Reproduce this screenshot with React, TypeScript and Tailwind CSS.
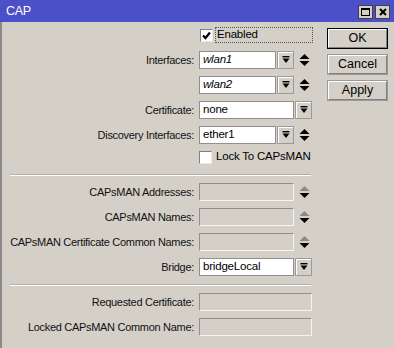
import React from "react";

const font = { fontFamily: '"Liberation Sans", Arial, sans-serif' };

function DropBtn() {
  return (
    <div className="w-[17px] h-[18px] ml-[1px] bg-[#d4d0c8] border border-[#9a9a9a] shadow-[inset_1px_1px_0_#ffffff] flex items-center justify-center">
      <svg width="8" height="8" viewBox="0 0 8 8">
        <rect x="0.5" y="0" width="7" height="1.4" fill="#000" />
        <polygon points="0.5,2.6 7.5,2.6 4,7" fill="#000" />
      </svg>
    </div>
  );
}

function UpDown({ disabledUp }: { disabledUp?: boolean }) {
  return (
    <svg width="11" height="14" viewBox="0 0 11 14" className="ml-[5px]">
      <polygon points="0.5,6 5.5,1 10.5,6" fill={disabledUp ? "#8a8a8a" : "#000"} />
      <polygon points="0.5,8 10.5,8 5.5,13" fill="#000" />
    </svg>
  );
}

function Input({ w, value, italic, disabled }: { w: string; value?: string; italic?: boolean; disabled?: boolean }) {
  return (
    <div
      className={`${w} h-[18px] border border-[#8f8f8f] px-[3px] flex items-center text-[11.5px] tracking-[-0.2px] ${
        disabled ? "bg-[#d4d0c8] border-b-[#f4f4f4] border-r-[#f4f4f4]" : "bg-white"
      } ${italic ? "italic" : ""}`}
    >
      {value}
    </div>
  );
}

function Row({ label, children, className }: { label: string; children: React.ReactNode; className?: string }) {
  return (
    <div className={`flex items-center h-[18px] ${className ?? ""}`}>
      <div className="w-[185px] flex justify-end text-[11px] tracking-[-0.3px] whitespace-nowrap pr-[1px] text-[#111]">
        <span>{label}</span>
      </div>
      <div className="ml-[4px] flex items-center">{children}</div>
    </div>
  );
}

function Checkbox({ checked }: { checked?: boolean }) {
  return (
    <div className="w-[13px] h-[13px] bg-white border border-t-[#808080] border-l-[#808080] border-r-[#e8e8e8] border-b-[#e8e8e8] flex items-center justify-center">
      {checked && (
        <svg width="9" height="9" viewBox="0 0 9 9">
          <polyline points="1,4.5 3.5,7 8,1.5" fill="none" stroke="#000" strokeWidth="2.2" />
        </svg>
      )}
    </div>
  );
}

function Sep({ className }: { className?: string }) {
  return <div className={`w-[301px] h-[2px] border-t border-t-[#b4b0a8] border-b border-b-white ${className ?? ""}`} />;
}

function Btn({ label, def }: { label: string; def?: boolean }) {
  return (
    <div
      className={`w-[61px] h-[21px] flex items-center justify-center text-[12.5px] bg-[#d4d0c8] ${
        def ? "border border-black" : "border border-[#9a9a9a]"
      }`}
    >
      <div className="w-full h-full flex items-center justify-center border border-t-white border-l-white border-r-[#808080] border-b-[#808080]">
        {label}
      </div>
    </div>
  );
}

export default function App() {
  return (
    <div className="w-[394px] h-[348px] bg-[#d4d0c8] flex flex-col text-black overflow-hidden" style={font}>
      <div className="h-[22px] bg-[#4b50c9] flex items-center justify-between pl-[6px] pr-[4px]">
        <span className="text-white text-[12.5px] tracking-[-0.3px]">CAP</span>
        <div className="flex gap-[2px] mt-[1px]">
          <div className="w-[15px] h-[14px] bg-[#d4d0c8] border border-[#404040] flex items-center justify-center">
            <div className="w-[9px] h-[8px] border border-black border-t-2" />
          </div>
          <div className="w-[15px] h-[14px] bg-[#d4d0c8] border border-[#404040] flex items-center justify-center">
            <svg width="8" height="8" viewBox="0 0 8 8">
              <path d="M1 1 L7 7 M7 1 L1 7" stroke="#000" strokeWidth="2" />
            </svg>
          </div>
        </div>
      </div>
      <div className="flex-1 flex border-l-2 border-l-[#8a8a8a]">
        <div className="w-[316px] pl-[8px] flex flex-col">
          <div className="flex items-center h-[16px] mt-[5px] ml-[190px]">
            <Checkbox checked />
            <div className="ml-[2px] w-[98px] h-[16px] border border-dotted border-[#555] flex items-center pl-[1px] text-[11.5px] tracking-[-0.2px]">
              Enabled
            </div>
          </div>
          <Row label="Interfaces:" className="mt-[8px]">
            <Input w="w-[77px]" value="wlan1" italic />
            <DropBtn />
            <UpDown />
          </Row>
          <Row label="" className="mt-[7px]">
            <Input w="w-[77px]" value="wlan2" italic />
            <DropBtn />
            <UpDown />
          </Row>
          <Row label="Certificate:" className="mt-[7px]">
            <Input w="w-[95px]" value="none" />
            <DropBtn />
          </Row>
          <Row label="Discovery Interfaces:" className="mt-[7px]">
            <Input w="w-[77px]" value="ether1" />
            <DropBtn />
            <UpDown />
          </Row>
          <div className="flex items-center h-[14px] mt-[6px] ml-[189px]">
            <Checkbox />
            <span className="ml-[4px] text-[11.5px] tracking-[-0.2px]">Lock To CAPsMAN</span>
          </div>
          <Sep className="mt-[10px]" />
          <Row label="CAPsMAN Addresses:" className="mt-[7px]">
            <Input w="w-[95px]" disabled />
            <UpDown disabledUp />
          </Row>
          <Row label="CAPsMAN Names:" className="mt-[7px]">
            <Input w="w-[95px]" disabled />
            <UpDown disabledUp />
          </Row>
          <Row label="CAPsMAN Certificate Common Names:" className="mt-[7px]">
            <Input w="w-[95px]" disabled />
            <UpDown disabledUp />
          </Row>
          <Row label="Bridge:" className="mt-[7px]">
            <Input w="w-[95px]" value="bridgeLocal" />
            <DropBtn />
          </Row>
          <Sep className="mt-[8px]" />
          <Row label="Requested Certificate:" className="mt-[7px]">
            <Input w="w-[113px]" disabled />
          </Row>
          <Row label="Locked CAPsMAN Common Name:" className="mt-[7px]">
            <Input w="w-[113px]" disabled />
          </Row>
        </div>
        <div className="flex flex-col gap-[5px] pt-[6px] ml-[9px]">
          <Btn label="OK" def />
          <Btn label="Cancel" />
          <Btn label="Apply" />
        </div>
      </div>
    </div>
  );
}
